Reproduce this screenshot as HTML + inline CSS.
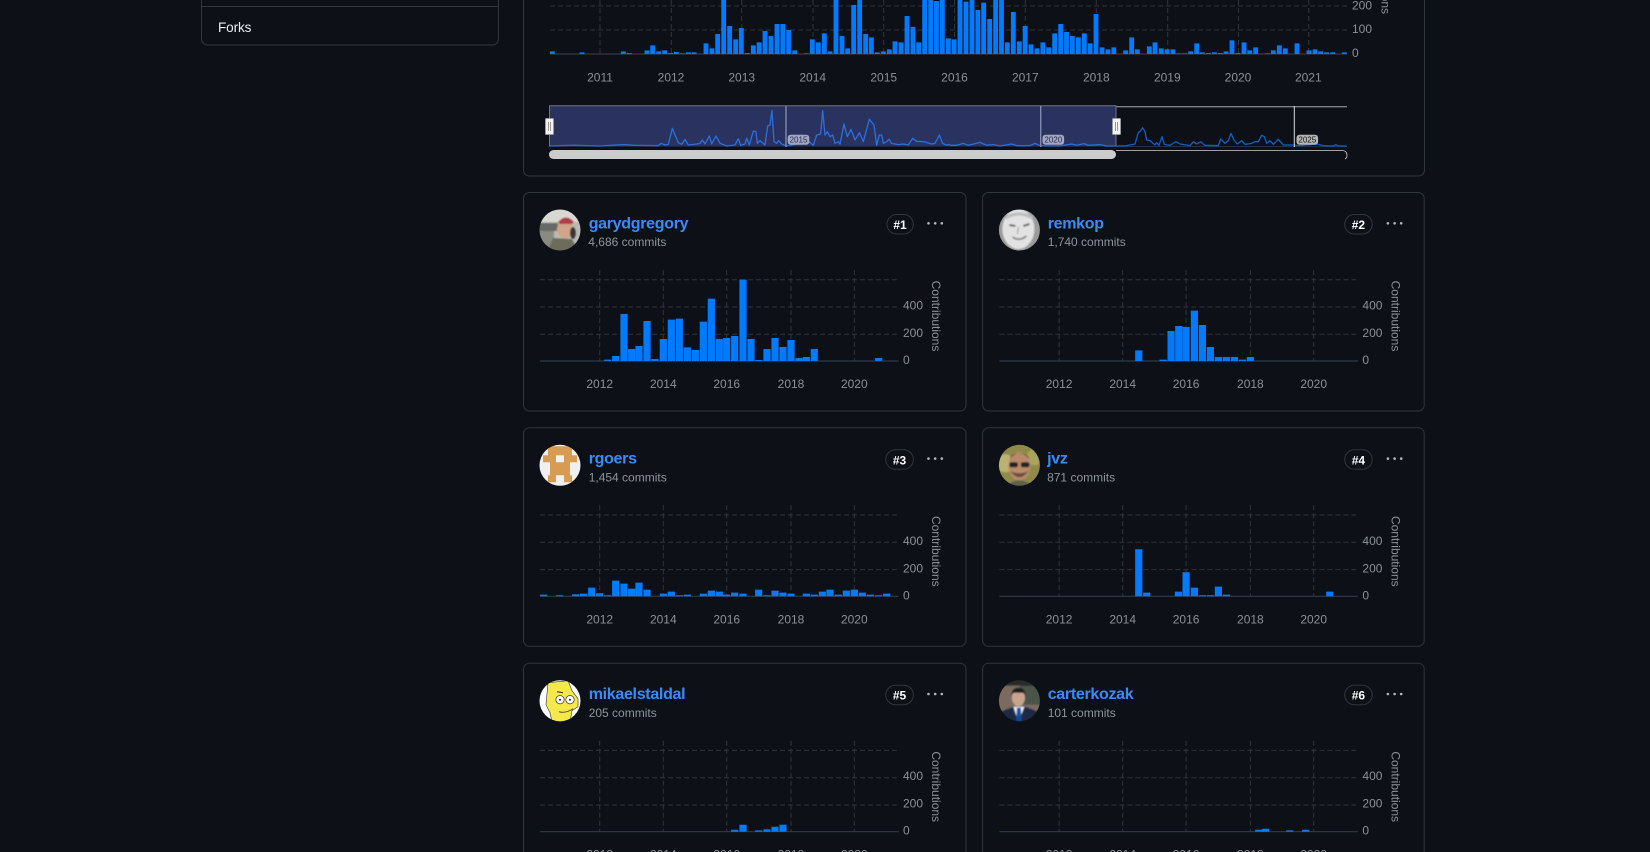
<!DOCTYPE html>
<html><head><meta charset="utf-8"><title>Contributors</title>
<style>
html,body{margin:0;padding:0;background:#0d1117;width:1650px;height:852px;overflow:hidden}
svg{display:block}
text{font-family:"Liberation Sans",sans-serif}
.y{font-size:12px;fill:#8b9097;text-anchor:middle}
.l{font-size:12px;fill:#8b9097}
.c{font-size:12px;fill:#8b9097}
.n{font-size:16px;font-weight:700;fill:#388bfd;letter-spacing:-.3px}
.m{font-size:12px;fill:#8b949e}
.r{font-size:12px;font-weight:700;fill:#fff;text-anchor:middle}
.card{fill:#0d1117;stroke:#30363d;stroke-width:1}
.bars{fill:none;stroke:#007bff;stroke-width:21.5}
.dash{stroke:#30353d;stroke-width:1;stroke-dasharray:5 3;fill:none}
.nl{font-size:8px;text-anchor:middle}
polyline{stroke-linejoin:round}
</style></head>
<body>
<svg width="1650" height="852" viewBox="0 0 1650 852" xmlns="http://www.w3.org/2000/svg">
<defs>
<clipPath id="av"><circle r="20.5"/></clipPath>
<filter id="soft" x="-10%" y="-10%" width="120%" height="120%"><feGaussianBlur stdDeviation=".7"/></filter>
<g id="grid">
<path class="dash" d="M20 89.7H376.7M20 117H376.7M20 144.3H376.7M79.7 80V171M143.3 80V171M206.7 80V171M271 80V171M334.3 80V171"/>
<path d="M20 171H378.5" stroke="#2f3b4c" stroke-width="1.2"/>
<circle cx="408.5" cy="33.3" r="1.3" fill="#b0b6be"/><circle cx="415.2" cy="33.3" r="1.3" fill="#b0b6be"/><circle cx="421.8" cy="33.3" r="1.3" fill="#b0b6be"/>
</g>
</defs>
<rect width="1650" height="852" fill="#0d1117"/>

<!-- sidebar -->
<rect class="card" x="201.5" y="-30" width="297" height="75" rx="6"/>
<path d="M202 6.5H498" stroke="#30363d"/>
<text x="218" y="32" style="font-size:13.6px;fill:#e6edf3;letter-spacing:-.15px">Forks</text>

<!-- main card -->
<rect class="card" x="523.5" y="-30" width="901" height="206" rx="6"/>
<path class="dash" d="M550 6H1347M550 30H1347M600 0V54M671.3 0V54M741.7 0V54M813 0V54M883.7 0V54M954.5 0V54M1025.3 0V54M1096.3 0V54M1167.7 0V54M1238.5 0V54M1308.7 0V54"/>
<path d="M550 54H1347" stroke="#2f3b4c" stroke-width="1.2"/>
<g transform="translate(500,0) scale(.33333)" fill="none" stroke="#007bff" stroke-width="14.5">
<path d="M157 162V154M246 162V157M370 162V154M387.5 162V159M441 162V151M458 162V136M476 162V154M494 162V151M512 162V159M529 162V156M547 162V160M565 162V157M582.5 162V157M618 162V130M636 162V145M653 162V102M671 162V-20M689 162V78M707 162V118M724 162V84M742 162V159M760 162V136M777.5 162V127M795 162V93M813 162V108M831 162V72M848.5 162V72M866 162V90M884 162V151M919 162V160M937 162V118M955 162V127M973 162V100M990 162V154M1008 162V-20M1026 162V108M1043 162V145M1061 162V15M1079 162V-20M1097 162V102M1114 162V112M1132 162V157M1150 162V154M1168 162V148M1185 162V124M1203 162V127M1221 162V48M1239 162V81M1256 162V127M1274 162V-20M1292 162V-20M1309.5 162V3M1327 162V-20M1345 162V115"/>
</g>
<g transform="translate(950,0) scale(.33333)" fill="none" stroke="#007bff" stroke-width="14.5">
<path d="M12.6 162V118M30 162V-20M48 162V5M66 162V-20M83.6 162V30M101 162V8M119 162V57M137 162V-20M154.5 162V-20M172 162V127M190 162V36M208 162V124M225.4 162V78M243 162V133M261 162V145M278.6 162V127M296 162V142M314 162V100M332 162V72M349.5 162V96M367 162V108M385 162V112M403 162V100M420.5 162V130M438 162V42M456 162V142M474 162V148M491.4 162V142M527 162V151M545 162V112M562 162V148M598 162V139M615 162V127M633.6 162V145M651 162V148M669 162V148M686.6 162V160M704 162V160M722 162V154M740 162V130M757 162V157M775 162V159M793 162V157M811 162V159M828 162V154M846 162V121M864 162V159M882 162V127M899 162V151M917 162V142M953 162V160M970 162V151M988 162V136M1006 162V145M1041 162V130M1077 162V151M1095 162V148M1112 162V154M1130 162V157M1148 162V157M1183 162V157"/>
</g>
<g class="y">
<text x="600" y="81.5">2011</text><text x="671" y="81.5">2012</text><text x="741.7" y="81.5">2013</text><text x="812.7" y="81.5">2014</text><text x="883.7" y="81.5">2015</text><text x="954.5" y="81.5">2016</text><text x="1025.3" y="81.5">2017</text><text x="1096.3" y="81.5">2018</text><text x="1167.3" y="81.5">2019</text><text x="1238" y="81.5">2020</text><text x="1308.3" y="81.5">2021</text>
</g>
<text class="l" x="1352" y="9.3">200</text><text class="l" x="1352" y="33">100</text><text class="l" x="1352" y="57">0</text>
<text class="c" transform="translate(1381.5,14) rotate(90)" text-anchor="end">Contributions</text>

<!-- navigator -->
<path d="M1116 106.7H1347" stroke="#a9a9a9" stroke-width="1"/>
<path d="M1116 146.5H1347" stroke="#20304a" stroke-width="1"/>
<rect x="549.5" y="105.8" width="566.5" height="40.7" fill="#2a3360"/>
<path d="M549.5 146.5V105.8H1116V146.5" fill="none" stroke="#6f7484" stroke-width="1"/>
<g transform="translate(500,0) scale(.33333)" fill="none" stroke="#2a6fe0" stroke-width="3.9">
<polyline points="150,438 220,436 300,438 370,434 400,436 475,437 483,430 495,435 505,433 517,385 525,405 535,428 545,433 555,418 565,435 590,432 600,430 607,420 615,432 628,408 635,432 648,408 660,430 680,438 705,435 715,416 722,436 735,432 740,415 748,435 760,393 768,395 772,430 780,422 795,435 803,378 810,375 816,332 822,425 830,430 836,422 845,432 858,438 875,435 900,430 925,423 940,436 950,405 962,402 968,332 975,405 982,395 990,410 998,405 1005,430 1015,425 1020,432 1032,372 1042,410 1053,388 1065,420 1078,398 1090,425 1108,358 1122,375 1130,436 1138,405 1145,405 1150,430 1160,425 1167,418 1175,430 1195,434 1210,432 1225,435 1238,415 1250,424 1270,425 1295,432 1305,430 1318,405 1328,430 1338,435 1350,434"/>
</g>
<g transform="translate(950,0) scale(.33333)" fill="none" stroke-width="3.9">
<polyline stroke="#2a6fe0" points="0,436 20,436 40,430 55,436 90,427 110,436 130,434 150,438 185,432 200,437 240,437 255,430 270,437 310,438 335,437 365,432 380,436 402,431 415,436 450,434 470,438 498,438"/>
<polyline stroke="#0f5fc4" points="498,438 530,437 545,434 555,432 565,397 570,395 578,383 585,395 590,420 600,422 615,435 620,428 627,436 636,410 643,433 660,436 678,425 690,432 720,437 730,425 740,432 752,425 765,436 805,437 812,417 825,430 835,422 843,400 852,420 862,432 875,422 885,433 905,430 915,425 925,425 935,406 943,410 950,430 960,422 970,433 985,418 1000,435 1030,435 1050,437 1075,434 1100,432 1120,437 1150,438 1158,434 1165,438 1190,438"/>
</g>
<path d="M786 106V147" stroke="#8a8fb0" stroke-width="1.3"/>
<path d="M1040.7 106V147" stroke="#8a8fb0" stroke-width="1.3"/>
<path d="M1294.3 106V147" stroke="#dcdcdc" stroke-width="1"/>
<rect x="787.7" y="134.7" width="21.6" height="10" rx="3" fill="#a3a7c4"/>
<text class="nl" x="798.5" y="142.5" fill="#262c50">2015</text>
<rect x="1042.5" y="134.7" width="21.6" height="10" rx="3" fill="#a3a7c4"/>
<text class="nl" x="1053.3" y="142.5" fill="#262c50">2020</text>
<rect x="1296.5" y="134.7" width="21.6" height="10" rx="3" fill="#b4b4b4"/>
<text class="nl" x="1307.3" y="142.5" fill="#111">2025</text>
<g fill="#f2f2f2" stroke="#999" stroke-width="1">
<rect x="545.5" y="118.5" width="8" height="16" rx="1"/>
<rect x="1112.5" y="118.5" width="8" height="16" rx="1"/>
</g>
<path d="M548.5 122V131M550.5 122V131M1115.5 122V131M1117.5 122V131" stroke="#999" stroke-width="1"/>
<path d="M1116 150.5H1342A4.5 4.5 0 0 1 1347 155A4.5 4.5 0 0 1 1345 159" fill="none" stroke="#cfcfcf" stroke-width=".8"/>
<rect x="549" y="150" width="567" height="9" rx="4.5" fill="#cccccc"/>

<!-- card 1 -->
<g transform="translate(520,190)">
<rect class="card" x="3.5" y="2.5" width="442.5" height="218.5" rx="6"/>
<use href="#grid"/>
<g transform="scale(.33333)"><path class="bars" d="M263 513V509M287 513V498M312 513V372M335 513V477M357 513V468M381 513V393M405 513V507M430 513V447M454 513V389M478 513V386M502 513V472M526 513V480M550 513V395M574 513V326M598 513V447M620 513V444M644 513V438M669 513V269M693 513V447M716 513V510M741 513V477M765 513V444M789 513V471M813 513V450M837 513V504M859 513V501M883 513V477M1076 513V504"/></g>
<g transform="translate(40,40)"><g clip-path="url(#av)"><g filter="url(#soft)">
<rect x="-22" y="-22" width="44" height="44" fill="#b9bab4"/>
<rect x="-22" y="-22" width="44" height="14" fill="#d8d8d2"/>
<rect x="-22" y="-7" width="20" height="8" fill="#666a64"/>
<rect x="-22" y="1" width="16" height="21" fill="#8a8a80"/>
<path d="M-13 22L-7 8L12 9L19 22Z" fill="#6d6c5a"/>
<ellipse cx="5" cy="-1" rx="8" ry="9" fill="#d2a488"/>
<path d="M-2 -8Q6 -17 14 -8L12 -6H0Z" fill="#b23a48"/>
<ellipse cx="13" cy="3" rx="3" ry="6" fill="#3b3230"/>
</g></g></g>
<text class="n" x="68.7" y="38.3">garydgregory</text>
<text class="m" x="68.3" y="56">4,686 commits</text>
<rect x="367" y="24.5" width="26.3" height="19.5" rx="9.7" fill="none" stroke="#30363d"/>
<text class="r" x="380" y="39">#1</text>
<g class="y"><text x="79.7" y="198">2012</text><text x="143.3" y="198">2014</text><text x="206.7" y="198">2016</text><text x="271" y="198">2018</text><text x="334.3" y="198">2020</text></g>
<text class="l" x="383" y="119.5">400</text><text class="l" x="383" y="147">200</text><text class="l" x="383" y="174">0</text>
<text class="c" transform="translate(412,126) rotate(90)" text-anchor="middle">Contributions</text>
</g>

<!-- card 2 -->
<g transform="translate(979.4,190)">
<rect class="card" x="3.2" y="2.5" width="441.6" height="218.5" rx="6"/>
<use href="#grid"/>
<g transform="scale(.33333)"><path class="bars" d="M478 513V481M551 513V509M575 513V423M598 513V408M620 513V411M645 513V362M669 513V405M693 513V471M717 513V501M741 513V501M765 513V501M789 513V509M813 513V501"/></g>
<g transform="translate(40,40)"><g clip-path="url(#av)"><g filter="url(#soft)">
<rect x="-22" y="-22" width="44" height="44" fill="#9a9a9a"/>
<ellipse cx="-1" cy="-1" rx="16" ry="20" fill="#e2e2e2"/>
<path d="M-14 -12Q0 -20 13 -12" stroke="#bbb" stroke-width="3" fill="none"/>
<path d="M-10 -5L-4 -4M4 -4L10 -6" stroke="#666" stroke-width="2"/>
<path d="M-7 7Q0 12 7 6" stroke="#777" stroke-width="1.6" fill="none"/>
<path d="M-1 -3L-2 4" stroke="#aaa" stroke-width="1.2"/>
</g></g></g>
<text class="n" x="68.3" y="38.3">remkop</text>
<text class="m" x="68.3" y="56">1,740 commits</text>
<rect x="365.3" y="24.5" width="27.5" height="19.5" rx="9.7" fill="none" stroke="#30363d"/>
<text class="r" x="379" y="39">#2</text>
<g class="y"><text x="79.7" y="198">2012</text><text x="143.3" y="198">2014</text><text x="206.7" y="198">2016</text><text x="271" y="198">2018</text><text x="334.3" y="198">2020</text></g>
<text class="l" x="383" y="119.5">400</text><text class="l" x="383" y="147">200</text><text class="l" x="383" y="174">0</text>
<text class="c" transform="translate(412,126) rotate(90)" text-anchor="middle">Contributions</text>
</g>

<!-- card 3 -->
<g transform="translate(520,425.3)">
<rect class="card" x="3.5" y="2.5" width="442.5" height="218.5" rx="6"/>
<use href="#grid"/>
<g transform="scale(.33333)"><path class="bars" d="M71 513V508M119 513V510M167 513V507M191 513V505M215 513V487M239 513V504M263 513V510M287 513V466M312 513V475M335 513V490M357 513V472M381 513V493M430 513V505M454 513V499M478 513V510M502 513V508M550 513V505M574 513V496M598 513V499M620 513V508M644 513V502M669 513V505M716 513V493M741 513V510M765 513V496M789 513V502M813 513V505M859 513V505M883 513V508M907 513V499M930 513V493M955 513V508M979 513V496M1003 513V493M1027 513V502M1051 513V508M1076 513V510M1100 513V505"/></g>
<g transform="translate(40,40)"><g clip-path="url(#av)">
<rect x="-21" y="-21" width="42" height="42" fill="#f0f0f0"/>
<path d="M-12 -19H12V-10H17V-3H10V10H12V17H4V10H-4V17H-12V10H-10V-3H-17V-10H-12Z" fill="#d79b52"/>
<rect x="-4" y="-10" width="8" height="7" fill="#f0f0f0"/>
</g></g>
<text class="n" x="68.7" y="38.3">rgoers</text>
<text class="m" x="68.7" y="56">1,454 commits</text>
<rect x="365.8" y="24.5" width="27.5" height="19.5" rx="9.7" fill="none" stroke="#30363d"/>
<text class="r" x="379.5" y="39">#3</text>
<g class="y"><text x="79.7" y="198">2012</text><text x="143.3" y="198">2014</text><text x="206.7" y="198">2016</text><text x="271" y="198">2018</text><text x="334.3" y="198">2020</text></g>
<text class="l" x="383" y="119.5">400</text><text class="l" x="383" y="147">200</text><text class="l" x="383" y="174">0</text>
<text class="c" transform="translate(412,126) rotate(90)" text-anchor="middle">Contributions</text>
</g>

<!-- card 4 -->
<g transform="translate(979.4,425.3)">
<rect class="card" x="3.2" y="2.5" width="441.6" height="218.5" rx="6"/>
<use href="#grid"/>
<g transform="scale(.33333)"><path class="bars" d="M478 513V372M502 513V502M597 513V499M620 513V441M645 513V487M669 513V510M693 513V510M717 513V484M741 513V508M1051 513V499"/></g>
<g transform="translate(40,40)"><g clip-path="url(#av)"><g filter="url(#soft)">
<rect x="-22" y="-22" width="44" height="44" fill="#8f8a4a"/>
<circle cx="-14" cy="-2" r="9" fill="#b9b272"/>
<circle cx="15" cy="-8" r="8" fill="#a8a45c"/>
<path d="M-15 22Q0 8 15 22Z" fill="#5f6048"/>
<ellipse cx="0" cy="1" rx="11" ry="14" fill="#b98a6a"/>
<path d="M-10 -6Q0 -18 10 -6L8 -10Q0 -14 -8 -10Z" fill="#5a4a3a"/>
<rect x="-10" y="-3" width="8.5" height="5" rx="2" fill="#222"/><rect x="1.5" y="-3" width="8.5" height="5" rx="2" fill="#222"/>
<path d="M-9 6Q0 18 9 6Q0 10 -9 6Z" fill="#6b5040"/>
</g></g></g>
<text class="n" x="67.7" y="38.3">jvz</text>
<text class="m" x="67.7" y="56">871 commits</text>
<rect x="365.3" y="24.5" width="27.5" height="19.5" rx="9.7" fill="none" stroke="#30363d"/>
<text class="r" x="379" y="39">#4</text>
<g class="y"><text x="79.7" y="198">2012</text><text x="143.3" y="198">2014</text><text x="206.7" y="198">2016</text><text x="271" y="198">2018</text><text x="334.3" y="198">2020</text></g>
<text class="l" x="383" y="119.5">400</text><text class="l" x="383" y="147">200</text><text class="l" x="383" y="174">0</text>
<text class="c" transform="translate(412,126) rotate(90)" text-anchor="middle">Contributions</text>
</g>

<!-- card 5 -->
<g transform="translate(520,660.7)">
<rect class="card" x="3.5" y="2.5" width="442.5" height="218.5" rx="6"/>
<use href="#grid"/>
<g transform="scale(.33333)"><path class="bars" d="M644 513V507M669 513V492M716 513V509M741 513V506M765 513V498M789 513V492"/></g>
<g transform="translate(40,40)"><g clip-path="url(#av)">
<rect x="-21" y="-21" width="42" height="42" fill="#fdfdfd"/>
<path d="M-12 -18L8 -20L12 -10L18 -2L18 6L12 10L10 21L-8 21L-10 12L-14 4Z" fill="#f5e84a" stroke="#333" stroke-width=".6"/>
<path d="M-3 -9L3 -8" stroke="#333" stroke-width="1"/>
<circle cx="0" cy="-1" r="4.2" fill="#fff" stroke="#333" stroke-width=".7"/><circle cx="0" cy="-1" r="1" fill="#222"/>
<circle cx="10" cy="-1" r="4.2" fill="#fff" stroke="#333" stroke-width=".7"/><circle cx="10" cy="-1" r="1" fill="#222"/>
<path d="M-1 11Q6 13 13 8" stroke="#333" stroke-width=".8" fill="none"/>
</g></g>
<text class="n" x="68.7" y="38.3">mikaelstaldal</text>
<text class="m" x="68.7" y="56.5">205 commits</text>
<rect x="365.8" y="24.5" width="27.5" height="19.5" rx="9.7" fill="none" stroke="#30363d"/>
<text class="r" x="379.5" y="39">#5</text>
<g class="y"><text x="79.7" y="198">2012</text><text x="143.3" y="198">2014</text><text x="206.7" y="198">2016</text><text x="271" y="198">2018</text><text x="334.3" y="198">2020</text></g>
<text class="l" x="383" y="119.5">400</text><text class="l" x="383" y="147">200</text><text class="l" x="383" y="174">0</text>
<text class="c" transform="translate(412,126) rotate(90)" text-anchor="middle">Contributions</text>
</g>

<!-- card 6 -->
<g transform="translate(979.4,660.7)">
<rect class="card" x="3.2" y="2.5" width="441.6" height="218.5" rx="6"/>
<use href="#grid"/>
<g transform="scale(.33333)"><path class="bars" d="M838 513V507M859 513V504M931 513V509M979 513V507"/></g>
<g transform="translate(40,40)"><g clip-path="url(#av)"><g filter="url(#soft)">
<rect x="-22" y="-22" width="44" height="44" fill="#7a6a60"/>
<rect x="0" y="-22" width="22" height="26" fill="#4a5548"/>
<rect x="-22" y="-22" width="44" height="7" fill="#2a2a2a"/>
<path d="M-22 22V12L-6 6H6L22 12V22Z" fill="#1f2a44"/>
<ellipse cx="-1" cy="-3" rx="6.5" ry="8.5" fill="#c9a48c"/>
<path d="M-8 -5Q-8 -13 -1 -13Q6 -13 6 -5L4 -8H-6Z" fill="#1c1c1c"/>
<path d="M-6 6L-1 21L5 6Z" fill="#f0f0f0"/>
<path d="M-2.5 7H1.5L2 21H-3Z" fill="#0a4da0"/>
</g></g></g>
<text class="n" x="68.3" y="38.3">carterkozak</text>
<text class="m" x="68.3" y="56.5">101 commits</text>
<rect x="365.3" y="24.5" width="27.5" height="19.5" rx="9.7" fill="none" stroke="#30363d"/>
<text class="r" x="379" y="39">#6</text>
<g class="y"><text x="79.7" y="198">2012</text><text x="143.3" y="198">2014</text><text x="206.7" y="198">2016</text><text x="271" y="198">2018</text><text x="334.3" y="198">2020</text></g>
<text class="l" x="383" y="119.5">400</text><text class="l" x="383" y="147">200</text><text class="l" x="383" y="174">0</text>
<text class="c" transform="translate(412,126) rotate(90)" text-anchor="middle">Contributions</text>
</g>
</svg>
</body></html>
